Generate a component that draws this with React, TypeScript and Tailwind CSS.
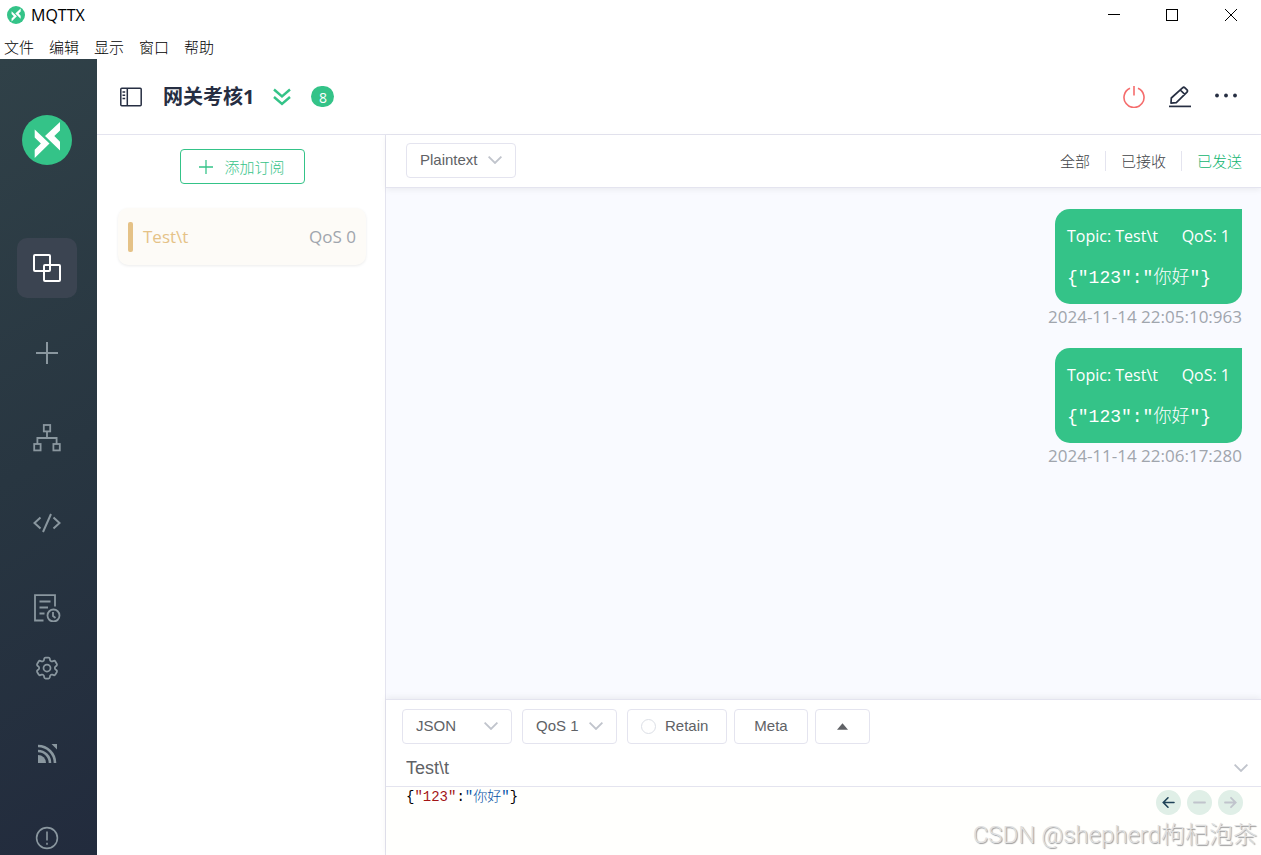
import React, { useState } from "react";
import { HiOutlineCog6Tooth } from "react-icons/hi2";

type IconProps = { className?: string };

const LogoIcon = ({ className }: IconProps) => (
    <svg viewBox="0 0 50 50" className={className} aria-hidden="true">
        <circle cx="25" cy="25" r="25" fill="#34c388" />
        <path d="M12.7 14.5 L27.5 28.6 L12.7 43 V34.7 L18.9 28.6 L12.7 22.4 Z" fill="#fff" />
        <path d="M38 7 V15.6 L32.3 21 L38 26.8 V35.5 L23 21 Z" fill="#fff" />
    </svg>
);

const ConnectionsIcon = () => (
    <svg viewBox="0 0 28 28" className="w-7 h-7" fill="none" stroke="currentColor" strokeWidth="2">
        <rect x="1" y="1" width="16" height="16" rx="1" />
        <rect x="11" y="11" width="16" height="16" rx="1" />
    </svg>
);

const PlusIcon = ({ className }: IconProps) => (
    <svg viewBox="0 0 22 22" className={className} fill="none" stroke="currentColor" strokeWidth="2">
        <path d="M11 0V22M0 11H22" />
    </svg>
);

const ChevronIcon = ({ className }: IconProps) => (
    <svg viewBox="0 0 14 8" className={className} fill="none" stroke="currentColor" strokeWidth="1.8">
        <path d="M0.6 0.6L7 7L13.4 0.6" />
    </svg>
);

const TreeIcon = () => (
    <svg viewBox="0 0 28 28" className="w-7 h-7" fill="none" stroke="currentColor" strokeWidth="1.8">
        <rect x="10.8" y="1" width="6.4" height="6.4" />
        <rect x="1.2" y="20" width="6.4" height="6.4" />
        <rect x="20.4" y="20" width="6.4" height="6.4" />
        <path d="M14 7.5V14M4.4 20V14H23.6V20" />
    </svg>
);

const CodeIcon = () => (
    <svg viewBox="0 0 28 28" className="w-7 h-7" fill="none" stroke="currentColor" strokeWidth="2">
        <path d="M7.5 8.5L1.5 14L7.5 19.5M20.5 8.5L26.5 14L20.5 19.5M18 5L10 23" />
    </svg>
);

const LogIcon = () => (
    <svg viewBox="0 0 28 28" className="w-7 h-7" fill="none" stroke="currentColor" strokeWidth="1.8">
        <path d="M10.5 26.5H2V1.2H22V12.5M6.5 7.5H17.5M6.5 13.5H15M6.5 19.5H11.5" />
        <circle cx="20.5" cy="21.5" r="6" />
        <path d="M20 18V22L22.5 24" />
    </svg>
);

const FeedIcon = () => (
    <svg viewBox="0 0 19 19" className="w-[19px] h-[19px]" fill="none" stroke="currentColor" strokeWidth="2.6">
        <path d="M0 11A8 8 0 0 1 8 19V19H0Z" fill="currentColor" stroke="none" />
        <path d="M0 7A12 12 0 0 1 12 19M0 2A17 17 0 0 1 17 19" />
        <path d="M13.5 0H19V5.5Z" fill="currentColor" stroke="none" />
    </svg>
);

const InfoIcon = () => (
    <svg viewBox="0 0 24 24" className="w-6 h-6" fill="none" stroke="currentColor" strokeWidth="1.6">
        <circle cx="12" cy="12" r="10.4" />
        <path d="M12 5.5V14.5M12 16.8V18.8" />
    </svg>
);

const PanelIcon = () => (
    <svg viewBox="0 0 22 20" className="w-[22px] h-5" fill="none" stroke="currentColor" strokeWidth="1.5">
        <rect x="0.8" y="1.2" width="20.4" height="17.6" rx="1" />
        <path d="M7.3 1V19M2.5 5H5.2M2.5 8.2H5.2M2.5 11.4H5.2" />
    </svg>
);

const DoubleDownIcon = () => (
    <svg viewBox="0 0 18 18" className="w-[18px] h-[18px]" fill="none" stroke="currentColor" strokeWidth="2.4">
        <path d="M1 1.5L9 8.5L17 1.5M1 9L9 16L17 9" />
    </svg>
);

const PowerIcon = () => (
    <svg viewBox="0 0 22 22" className="w-[22px] h-[22px]" fill="none" stroke="currentColor" strokeWidth="1.6">
        <path d="M7 2.3A10 10 0 1 0 15 2.3M11 0V9.5" />
    </svg>
);

const EditIcon = () => (
    <svg viewBox="0 0 22 22" className="w-[22px] h-[22px]" fill="none" stroke="currentColor" strokeWidth="1.7" strokeLinejoin="round">
        <path d="M2 17.2L2.3 12L13.5 1.8Q14.8 0.7 16 1.8L18 3.8Q19 5 18 6.2L7.3 16.6Z M11.3 4L15.8 8.4" />
        <path d="M0 20.4H22" />
    </svg>
);

const navItems = [
    { name: "connections", icon: <ConnectionsIcon /> },
    { name: "new", icon: <PlusIcon className="w-[22px] h-[22px]" /> },
    { name: "viewer", icon: <TreeIcon /> },
    { name: "script", icon: <CodeIcon /> },
    { name: "log", icon: <LogIcon /> },
];

const bottomItems = [
    { name: "settings", icon: <HiOutlineCog6Tooth className="w-7 h-7" /> },
    { name: "feed", icon: <FeedIcon /> },
    { name: "about", icon: <InfoIcon /> },
];

const messages = [{ time: "2024-11-14 22:05:10:963" }, { time: "2024-11-14 22:06:17:280" }];

const TitleBar = () => (
    <div className="flex items-center h-[30px] pl-[7px] text-black">
        <LogoIcon className="w-[18px] h-[18px]" />
        <span className="ml-[6px] text-base leading-5">MQTTX</span>
        <div className="ml-auto flex">
            <button type="button" aria-label="Minimize" className="w-[58px] h-[30px] flex items-center justify-center">
                <svg viewBox="0 0 12 12" className="w-3 h-3" stroke="currentColor" shapeRendering="crispEdges">
                    <path d="M0 5.5H12" />
                </svg>
            </button>
            <button type="button" aria-label="Maximize" className="w-[58px] h-[30px] flex items-center justify-center">
                <svg viewBox="0 0 12 12" className="w-3 h-3" fill="none" stroke="currentColor" shapeRendering="crispEdges">
                    <rect x="0.5" y="0.5" width="11" height="11" />
                </svg>
            </button>
            <button type="button" aria-label="Close" className="w-[60px] h-[30px] flex items-center justify-center">
                <svg viewBox="0 0 12 12" className="w-3 h-3" stroke="currentColor">
                    <path d="M0 0L12 12M12 0L0 12" />
                </svg>
            </button>
        </div>
    </div>
);

const MenuBar = () => (
    <nav className="flex gap-[15px] h-[29px] pl-1 pt-[7px] text-[15px] leading-5 font-light text-black">
        {["文件", "编辑", "显示", "窗口", "帮助"].map((item) => (
            <button key={item} type="button" className="h-5">
                {item}
            </button>
        ))}
    </nav>
);

const SideBar = () => {
    const [active, setActive] = useState<string>("connections");

    return (
        <aside className="w-[97px] shrink-0 flex flex-col items-center pt-14 overflow-hidden bg-linear-[150deg] from-[#304148] via-[#283641] to-[#222b3d] text-[#8a979f]">
            <LogoIcon className="w-[50px] h-[50px] shrink-0 mr-[3px]" />
            <div className="flex flex-col gap-[25px] mt-[73px] mr-[3px]">
                {navItems.map(({ name, icon }) => (
                    <button
                        key={name}
                        type="button"
                        aria-label={name}
                        onClick={() => setActive(name)}
                        className={`w-[60px] h-[60px] shrink-0 rounded-[10px] flex items-center justify-center ${
                            active === name ? "bg-[#3b4451] text-white" : ""
                        }`}
                    >
                        {icon}
                    </button>
                ))}
            </div>
            <div className="flex flex-col gap-[25px] mr-[3px]">
                {bottomItems.map(({ name, icon }) => (
                    <button
                        key={name}
                        type="button"
                        aria-label={name}
                        className="w-[60px] h-[60px] shrink-0 flex items-center justify-center"
                    >
                        {icon}
                    </button>
                ))}
            </div>
        </aside>
    );
};

const Header = () => (
    <header className="flex items-center h-[76px] shrink-0 pl-[23px] pr-6 border-b border-[#e4e4ef] text-[#262e42]">
        <button type="button" aria-label="Toggle list">
            <PanelIcon />
        </button>
        <h1 className="ml-[21px] text-xl leading-7 font-bold">网关考核1</h1>
        <button type="button" aria-label="Expand" className="ml-[19px] text-[#34c388]">
            <DoubleDownIcon />
        </button>
        <span className="ml-5 h-[21px] min-w-[23px] rounded-full bg-[#34c388] text-center text-sm leading-[23px] text-white">
            8
        </span>
        <div className="ml-auto flex items-center gap-6">
            <button type="button" aria-label="Disconnect" className="text-[#f56c6c]">
                <PowerIcon />
            </button>
            <button type="button" aria-label="Edit">
                <EditIcon />
            </button>
            <button type="button" aria-label="More">
                <svg viewBox="0 0 22 22" className="w-[22px] h-[22px]" fill="currentColor">
                    <circle cx="2" cy="9.5" r="1.9" />
                    <circle cx="11" cy="9.5" r="1.9" />
                    <circle cx="20" cy="9.5" r="1.9" />
                </svg>
            </button>
        </div>
    </header>
);

const Subscriptions = () => (
    <section className="w-[289px] shrink-0 border-r border-[#e4e4ef] pl-[21px] pr-[19px] pt-[14px]">
        <button
            type="button"
            className="mx-auto flex items-center justify-center gap-[11px] w-[125px] h-[35px] rounded border border-[#34c388] text-[15px] leading-5 font-light text-[#34c388]"
        >
            <PlusIcon className="w-[14px] h-[14px]" />
            添加订阅
        </button>
        <div className="flex items-center h-[57px] mt-6 px-[10px] rounded-[10px] bg-[#fdfbf7] shadow-[0_1px_3px_rgba(0,0,0,0.08)] text-[17px] leading-6">
            <span className="w-[5px] h-[30px] rounded-xs bg-[#e5c287]" />
            <span className="ml-[10px] text-[#e5c287]">Test\t</span>
            <span className="ml-auto text-[#a0a5ad]">QoS 0</span>
        </div>
    </section>
);

type SelectBoxProps = { label: string; options: string[]; width: string };

const SelectBox = ({ label, options, width }: SelectBoxProps) => (
    <div className={`relative h-[35px] ${width}`}>
        <select
            aria-label={label}
            className="appearance-none w-full h-full pl-[13px] pr-6 rounded border border-[#e4e4ef] bg-white font-['Liberation_Sans',sans-serif] text-[15px] text-[#606266]"
        >
            {options.map((option) => (
                <option key={option}>{option}</option>
            ))}
        </select>
        <ChevronIcon className="absolute right-[14px] top-[13px] w-[14px] h-2 text-[#c0c4cc] pointer-events-none" />
    </div>
);

const filters = ["全部", "已接收", "已发送"];

const MessageArea = () => {
    const [filter, setFilter] = useState<string>("已发送");

    return (
        <>
            <div className="relative z-10 flex items-center h-[53px] shrink-0 pb-px pl-5 pr-[19px] bg-white border-b border-[#e4e4ef] shadow-[0_2px_6px_rgba(0,0,0,0.06)]">
                <SelectBox label="Payload format" options={["Plaintext", "JSON", "Hex"]} width="w-[110px]" />
                <div className="ml-auto flex items-center text-[15px] leading-5 font-light">
                    {filters.map((item, index) => (
                        <button
                            key={item}
                            type="button"
                            onClick={() => setFilter(item)}
                            className={`${index > 0 ? "ml-[15px] pl-[15px] border-l border-[#e4e4ef]" : ""} ${
                                filter === item ? "text-[#10b56f]" : "text-[#404246]"
                            }`}
                        >
                            {item}
                        </button>
                    ))}
                </div>
            </div>
            <div className="flex-1 min-h-0 overflow-hidden flex flex-col items-end gap-[15px] pt-[21px] pr-[19px] bg-[#f9faff]">
                {messages.map(({ time }) => (
                    <article key={time} className="flex flex-col items-end h-[124px]">
                        <div className="w-[187px] h-[95px] px-3 pt-[15px] rounded-[15px] rounded-tr-none bg-[#34c388] text-white">
                            <p className="flex justify-between text-base leading-6 whitespace-nowrap">
                                <span>Topic: Test\t</span>
                                <span>QoS: 1</span>
                            </p>
                            <pre className="mt-[18px] font-['Liberation_Mono','Noto_Sans_CJK_SC',monospace] text-lg leading-6 font-light">
                                {'{"123":"你好"}'}
                            </pre>
                        </div>
                        <time className="mt-px text-[17px] leading-6 text-[#a0a5ad]">{time}</time>
                    </article>
                ))}
            </div>
        </>
    );
};

const Publisher = () => {
    const [topic, setTopic] = useState<string>("Test\\t");

    return (
        <div className="relative z-10 h-[156px] shrink-0 flex flex-col bg-white border-t border-[#e4e4ef] shadow-[0_-2px_6px_rgba(0,0,0,0.06)] font-['Liberation_Sans','Noto_Sans_CJK_SC',sans-serif] text-[#606266]">
            <div className="flex items-center pt-[9px] pl-4 text-[15px]">
                <SelectBox label="Payload" options={["JSON", "Plaintext", "Hex"]} width="w-[110px]" />
                <div className="ml-[10px]">
                    <SelectBox label="QoS" options={["QoS 1", "QoS 0", "QoS 2"]} width="w-[95px]" />
                </div>
                <label className="ml-[10px] flex items-center gap-[9px] w-[100px] h-[35px] pl-[13px] rounded border border-[#e4e4ef]">
                    <input type="radio" className="appearance-none w-[15px] h-[15px] rounded-full border border-[#dcdfe6] checked:bg-[#34c388]" />
                    Retain
                </label>
                <button type="button" className="ml-[7px] w-[74px] h-[35px] rounded border border-[#e4e4ef]">
                    Meta
                </button>
                <button
                    type="button"
                    aria-label="Collapse"
                    className="ml-[7px] w-[55px] h-[35px] rounded border border-[#e4e4ef] flex items-center justify-center"
                >
                    <svg viewBox="0 0 12 7" className="w-[11px] h-[7px]" fill="currentColor">
                        <path d="M6 0L12 7H0Z" />
                    </svg>
                </button>
            </div>
            <div className="flex items-center h-[43px] pt-[5px] pl-5 pr-[13px] border-b border-[#e4e4ef]">
                <input
                    aria-label="Topic"
                    value={topic}
                    onChange={(e) => setTopic(e.target.value)}
                    className="flex-1 min-w-0 text-lg leading-6 outline-none"
                />
                <ChevronIcon className="w-[14px] h-2 text-[#c0c4cc]" />
            </div>
            <div className="flex-1 flex items-start justify-between pl-5 pr-[18px] bg-[#fffffd]">
                <div
                    role="textbox"
                    aria-label="Payload body"
                    className="font-['Liberation_Mono','Noto_Sans_CJK_SC',monospace] text-sm leading-5 font-light text-black"
                >
                    {"{"}
                    <span className="text-[#a31515]">"123"</span>:<span className="text-[#0451a5]">"你好"</span>
                    {"}"}
                </div>
                <div className="flex gap-[6px] pt-[3px] text-[#c0c4cc]">
                    <button type="button" aria-label="Previous" className="w-[25px] h-[25px] rounded-full bg-[#e0efe7] flex items-center justify-center text-[#1f4257]">
                        <svg viewBox="0 0 13 13" className="w-[13px] h-[13px]" fill="none" stroke="currentColor" strokeWidth="1.6" strokeLinecap="round">
                            <path d="M12 6.5H1.5M6 1.8L1.3 6.5L6 11.2" />
                        </svg>
                    </button>
                    <button type="button" aria-label="Remove" className="w-[25px] h-[25px] rounded-full bg-[#e0efe7] flex items-center justify-center">
                        <svg viewBox="0 0 13 13" className="w-[13px] h-[13px]" stroke="currentColor" strokeWidth="1.8" strokeLinecap="round">
                            <path d="M1 6.5H12" />
                        </svg>
                    </button>
                    <button type="button" aria-label="Next" className="w-[25px] h-[25px] rounded-full bg-[#e0efe7] flex items-center justify-center">
                        <svg viewBox="0 0 13 13" className="w-[13px] h-[13px]" fill="none" stroke="currentColor" strokeWidth="1.8" strokeLinecap="round">
                            <path d="M1 6.5H11.5M7 1.8L11.7 6.5L7 11.2" />
                        </svg>
                    </button>
                </div>
            </div>
        </div>
    );
};

const App = () => {
    return (
        <div className="relative flex flex-col h-screen overflow-hidden bg-white font-['Open_Sans','Noto_Sans_CJK_SC',sans-serif]">
            <TitleBar />
            <MenuBar />
            <div className="flex flex-1 min-h-0">
                <SideBar />
                <main className="flex flex-col flex-1 min-w-0">
                    <Header />
                    <div className="flex flex-1 min-h-0">
                        <Subscriptions />
                        <div className="flex flex-col flex-1 min-w-0">
                            <MessageArea />
                            <Publisher />
                        </div>
                    </div>
                </main>
            </div>

            {/* Watermark */}
            <div className="absolute z-20 right-1 bottom-1 font-['Roboto','Noto_Sans_CJK_SC',sans-serif] text-2xl font-light text-[#e0e0e0] [text-shadow:1px_1px_1px_#999] pointer-events-none">
                CSDN @shepherd枸杞泡茶
            </div>
        </div>
    );
};

export default App;
